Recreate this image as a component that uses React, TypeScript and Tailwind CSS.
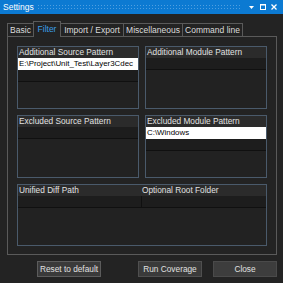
const font = { fontFamily: '"Liberation Sans", Arial, sans-serif' };

function ListBox({ title, value }: { title: string; value?: string }) {
  return (
    <div className="flex-1 h-[63px] border border-[#4a5a6b] bg-[#222222] flex flex-col overflow-hidden">
      <div className="h-[11px] bg-[#2b2b2b] text-[#e2e2e2] text-[8.3px] leading-[11px] pl-[1px] whitespace-nowrap">
        {title}
      </div>
      {value && (
        <div className="h-[12px] bg-white text-black text-[7.9px] leading-[12px] pl-[1px] whitespace-nowrap">
          {value}
        </div>
      )}
      <div className="h-[12px] bg-[#1d1d1d] border-b border-[#101010]" />
    </div>
  );
}

export default function App() {
  const tabs = [
    { label: 'Basic', w: 'w-[27px]' },
    { label: 'Filter', w: 'w-[28px]', active: true },
    { label: 'Import / Export', w: 'w-[64px]' },
    { label: 'Miscellaneous', w: 'w-[60px]' },
    { label: 'Command line', w: 'w-[61px]' },
  ];

  return (
    <div className="w-[283px] h-[283px] bg-[#232323] flex flex-col overflow-hidden" style={font}>
      {/* Title bar */}
      <div className="h-[14px] bg-[#0c7ad2] flex items-center pl-[3px] pr-[6px]">
        <span className="text-white text-[8.5px] leading-none">Settings</span>
        <div className="flex-1 h-[6px] ml-[3px] mr-[8px] bg-[radial-gradient(circle,#4f9fe0_0.8px,transparent_1px)] bg-[length:3px_3px]" />
        <svg width="5" height="3" viewBox="0 0 5 3" className="mr-[6px]">
          <path d="M0 0h5L2.5 3z" fill="#fff" />
        </svg>
        <svg width="6" height="6" viewBox="0 0 6 6" className="mr-[5px]">
          <rect x="0.5" y="0.5" width="5" height="5" fill="none" stroke="#fff" strokeWidth="1" />
          <rect x="0" y="0" width="6" height="1.5" fill="#fff" />
        </svg>
        <svg width="6" height="6" viewBox="0 0 6 6">
          <path d="M0.5 0.5l5 5M5.5 0.5l-5 5" stroke="#fff" strokeWidth="1.3" />
        </svg>
      </div>

      {/* Tabs */}
      <div className="flex items-end ml-[7px] mt-[7px]">
        {tabs.map((t) => (
          <div
            key={t.label}
            className={
              t.active
                ? `${t.w} -ml-px h-[16px] border border-b-0 border-[#5a5a5a] bg-[#232323] relative z-10 -mb-px text-[#3a9ee6] text-[8.5px] leading-[14px] text-center`
                : `${t.w} -ml-px first:ml-0 h-[13px] border border-b-0 border-[#5a5a5a] text-[#dcdcdc] text-[8.5px] leading-[12px] text-center whitespace-nowrap`
            }
          >
            {t.label}
          </div>
        ))}
      </div>

      {/* Tab panel */}
      <div className="ml-[7px] w-[270px] h-[219px] border border-[#5a5a5a] pt-[9px] px-[9px] flex flex-col gap-[6px]">
        <div className="flex gap-[6px]">
          <ListBox title="Additional Source Pattern" value="E:\Project\Unit_Test\Layer3Cdec" />
          <ListBox title="Additional Module Pattern" />
        </div>
        <div className="flex gap-[6px]">
          <ListBox title="Excluded Source Pattern" />
          <ListBox title="Excluded Module Pattern" value="C:\Windows" />
        </div>
        <div className="h-[62px] border border-[#4a5a6b] bg-[#222222] flex flex-col">
          <div className="h-[11px] bg-[#2b2b2b] flex text-[#e2e2e2] text-[8.3px] leading-[11px]">
            <div className="w-[124px] pl-[1px]">Unified Diff Path</div>
            <div className="flex-1">Optional Root Folder</div>
          </div>
          <div className="h-[12px] flex border-b border-[#101010] bg-[#1d1d1d]">
            <div className="w-[124px] border-r border-[#101010]" />
            <div className="flex-1" />
          </div>
        </div>
      </div>

      {/* Buttons */}
      <div className="flex mt-[6px] pl-[37px]">
        <button className="w-[64px] h-[16px] bg-[#3a3a3a] border border-[#5c5c5c] text-[#e0e0e0] text-[8.3px] leading-none">
          Reset to default
        </button>
        <button className="ml-[37px] w-[64px] h-[16px] bg-[#3a3a3a] border border-[#4f4f4f] text-[#e0e0e0] text-[8.3px] leading-none">
          Run Coverage
        </button>
        <button className="ml-[11px] w-[64px] h-[16px] bg-[#3d3d3d] border border-[#4a4a4a] text-[#e0e0e0] text-[8.3px] leading-none">
          Close
        </button>
      </div>
    </div>
  );
}
